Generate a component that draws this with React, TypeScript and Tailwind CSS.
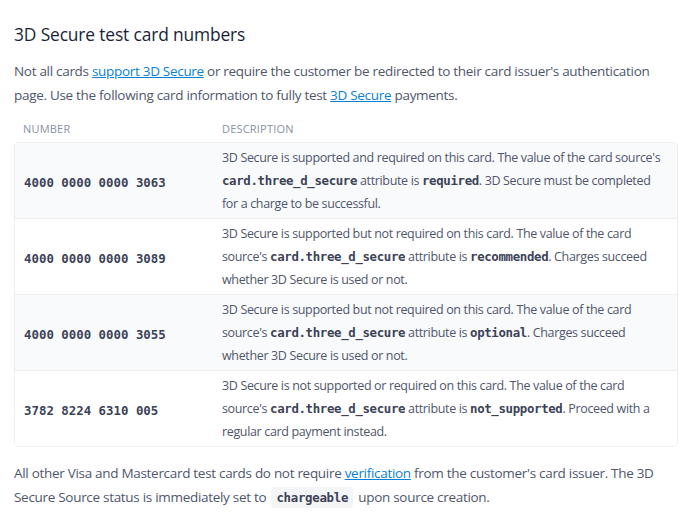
import React from 'react';

const rows = [
  {
    number: '4000 0000 0000 3063',
    before: "3D Secure is supported and required on this card. The value of the card source's ",
    value: 'required',
    after: '. 3D Secure must be completed for a charge to be successful.',
  },
  {
    number: '4000 0000 0000 3089',
    before: "3D Secure is supported but not required on this card. The value of the card source's ",
    value: 'recommended',
    after: '. Charges succeed whether 3D Secure is used or not.',
  },
  {
    number: '4000 0000 0000 3055',
    before: "3D Secure is supported but not required on this card. The value of the card source's ",
    value: 'optional',
    after: '. Charges succeed whether 3D Secure is used or not.',
  },
  {
    number: '3782 8224 6310 005',
    before: "3D Secure is not supported or required on this card. The value of the card source's ",
    value: 'not_supported',
    after: '. Proceed with a regular card payment instead.',
  },
];

const Code = ({ children }: { children: React.ReactNode }) => (
  <code className="font-['DejaVu_Sans_Mono',monospace] font-bold text-[12.4px] leading-none text-[#3c4257]">{children}</code>
);

export default function App() {
  return (
    <div className="w-[697px] h-[518px] bg-white px-[14px] pt-[22px] font-['Open_Sans',sans-serif] text-[#4f566b] overflow-hidden">
      <h2 className="text-[17.4px] leading-6 font-medium text-[#1a1f36] tracking-[-0.15px]">3D Secure test card numbers</h2>

      <p className="mt-[13px] w-[660px] text-[13.5px] leading-6 tracking-[-0.3px]">
        Not all cards <a className="text-[#0a7fd6] underline">support 3D Secure</a> or require the customer be redirected to their card issuer's authentication page. Use the following card information to fully test{' '}
        <a className="text-[#0a7fd6] underline">3D Secure</a> payments.
      </p>

      <div className="mt-[12px] flex text-[11px] uppercase tracking-[0.2px] text-[#8792a2] leading-5">
        <div className="w-[199px] pl-[9px] shrink-0">Number</div>
        <div className="pl-[9px]">Description</div>
      </div>

      <div className="mt-[3px] w-[664px] border border-[#eceef1] rounded-[5px] overflow-hidden">
        {rows.map((r, i) => (
          <div
            key={r.number}
            className={`flex items-center ${i % 2 === 0 ? 'bg-[#f9fafc]' : 'bg-white'} ${i > 0 ? 'border-t border-[#eceef1]' : ''}`}
          >
            <div className="w-[199px] shrink-0 pl-[9px]">
              <Code>{r.number}</Code>
            </div>
            <div className="flex-1 pl-[8px] pr-[8px] py-[3px] text-[12.5px] leading-[23px] tracking-[-0.35px] text-[#4f566b]">
              {r.before}
              <Code>card.three_d_secure</Code> attribute is <Code>{r.value}</Code>
              {r.after}
            </div>
          </div>
        ))}
      </div>

      <p className="mt-[14px] text-[13.5px] leading-6 tracking-[-0.3px]">
        All other Visa and Mastercard test cards do not require <a className="text-[#0a7fd6] underline">verification</a> from the customer's card issuer. The 3D Secure Source status is immediately set to{' '}
        <code className="mx-[2px] px-[5px] py-[3px] rounded-[4px] bg-[#f4f5f7] font-['DejaVu_Sans_Mono',monospace] font-bold text-[12.4px] leading-none text-[#3c4257]">chargeable</code>{' '}
        upon source creation.
      </p>
    </div>
  );
}
